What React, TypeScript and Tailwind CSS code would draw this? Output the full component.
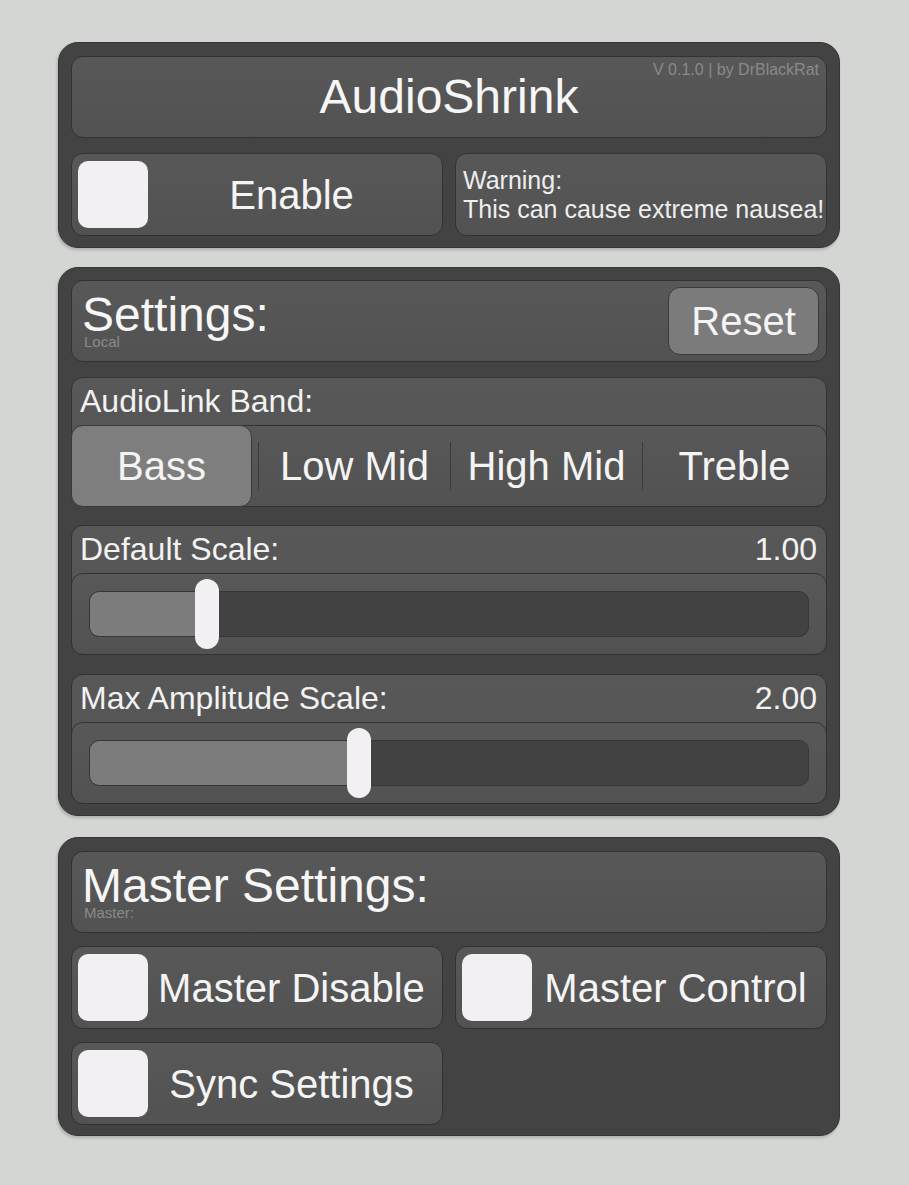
import React from "react";

const font = "font-['Liberation_Sans',Arial,sans-serif]";

const panel =
  "w-[782px] rounded-[20px] border border-[#363636] bg-[#434343] px-[12px] shadow-[-1px_2px_3px_rgba(0,0,0,0.18)]";
const box =
  "rounded-[12px] border border-[#323232] bg-linear-to-b from-[#585858] to-[#525252]";

function Checkbox() {
  return <div className="h-[67px] w-[70px] shrink-0 rounded-[10px] bg-[#f2f0f2]" />;
}

function Toggle({ label }: { label: string }) {
  return (
    <div className={`${box} flex h-[83px] items-center pl-[6px] pr-[7px]`}>
      <Checkbox />
      <span className="flex-1 text-center text-[40px] leading-none text-[#f4f4f4]">{label}</span>
    </div>
  );
}

function Header({ title, sub, children }: { title: string; sub: string; children?: React.ReactNode }) {
  return (
    <div className={`${box} flex h-[82px] items-start justify-between pr-[7px]`}>
      <div className="flex flex-col pl-[10px] pt-[16px]">
        <span className="text-[48px] leading-[36px] text-[#f6f6f6]">{title}</span>
        <span className="mt-[1px] pl-[2px] text-[15px] leading-[15px] text-[#8a8a8a]">{sub}</span>
      </div>
      {children}
    </div>
  );
}

function Slider({ label, value, frac }: { label: string; value: string; frac: number }) {
  return (
    <div className={`${box} flex h-[130px] flex-col`}>
      <div className="flex h-[47px] justify-between pl-[8px] pr-[9px] pt-[7px] text-[32px] leading-[32px] text-[#f2f2f2]">
        <span>{label}</span>
        <span>{value}</span>
      </div>
      <div className={`${box} -mx-px -mb-px flex-1 p-[17px]`}>
        <div className="relative h-[46px] rounded-[10px] border border-[#363636] bg-[#424242]">
          <div
            className="absolute inset-y-0 left-0 rounded-l-[9px] bg-[#7c7c7c]"
            style={{ width: `calc(${frac} * (100% - 24px) + 12px)` }}
          />
          <div
            className="absolute top-[-13px] h-[70px] w-[24px] rounded-[12px] bg-[#f2f0f2]"
            style={{ left: `calc(${frac} * (100% - 24px))` }}
          />
        </div>
      </div>
    </div>
  );
}

const bands = ["Bass", "Low Mid", "High Mid", "Treble"];

export default function App() {
  return (
    <div className={`${font} min-h-[1185px] bg-[#d4d6d3] pl-[58px] pt-[42px]`}>
      <div className={`${panel} flex flex-col gap-[15px] pb-[11px] pt-[13px]`}>
        <div className={`${box} relative flex h-[82px] items-center justify-center`}>
          <span className="text-[48px] leading-none text-[#f6f6f6]">AudioShrink</span>
          <span className="absolute right-[7px] top-[5px] text-[16px] leading-[16px] text-[#8a8a8a]">
            V 0.1.0 | by DrBlackRat
          </span>
        </div>
        <div className="grid grid-cols-2 gap-[12px]">
          <Toggle label="Enable" />
          <div className={`${box} flex h-[83px] flex-col justify-center pl-[7px] text-[25px] leading-[29px] text-[#eeeeee]`}>
            <span>Warning:</span>
            <span>This can cause extreme nausea!</span>
          </div>
        </div>
      </div>

      <div className={`${panel} mt-[19px] flex flex-col pb-[11px] pt-[12px]`}>
        <Header title="Settings:" sub="Local">
          <button className="mt-[6px] h-[68px] w-[151px] rounded-[12px] border border-[#3a3a3a] bg-[#7b7b7b] text-[40px] leading-none text-[#f4f4f4]">
            Reset
          </button>
        </Header>

        <div className={`${box} mt-[15px] flex h-[130px] flex-col`}>
          <div className="h-[47px] pl-[8px] pt-[7px] text-[32px] leading-[32px] text-[#f2f2f2]">AudioLink Band:</div>
          <div className={`${box} -mx-px -mb-px grid flex-1 grid-cols-[186px_1px_191px_1px_191px_1px_1fr] items-center`}>
            {bands.map((b, i) => (
              <React.Fragment key={b}>
                {i > 0 && <div className="h-[48px] w-px bg-[#3c3c3c]" />}
                <div className={`flex h-full ${i === 0 ? "pr-[6px]" : ""}`}>
                  <div
                    className={`-my-px flex flex-1 items-center justify-center text-[40px] leading-none text-[#f4f4f4] ${
                      i === 0 ? "-ml-px rounded-[12px] border border-[#3a3a3a] bg-[#7e7e7e]" : ""
                    }`}
                  >
                    {b}
                  </div>
                </div>
              </React.Fragment>
            ))}
          </div>
        </div>

        <div className="mt-[18px]">
          <Slider label="Default Scale:" value="1.00" frac={0.151} />
        </div>
        <div className="mt-[19px]">
          <Slider label="Max Amplitude Scale:" value="2.00" frac={0.37} />
        </div>
      </div>

      <div className={`${panel} mt-[21px] flex flex-col gap-[13px] pb-[10px] pt-[13px]`}>
        <Header title="Master Settings:" sub="Master:" />
        <div className="grid grid-cols-2 gap-x-[12px] gap-y-[13px]">
          <Toggle label="Master Disable" />
          <Toggle label="Master Control" />
          <Toggle label="Sync Settings" />
        </div>
      </div>
    </div>
  );
}
